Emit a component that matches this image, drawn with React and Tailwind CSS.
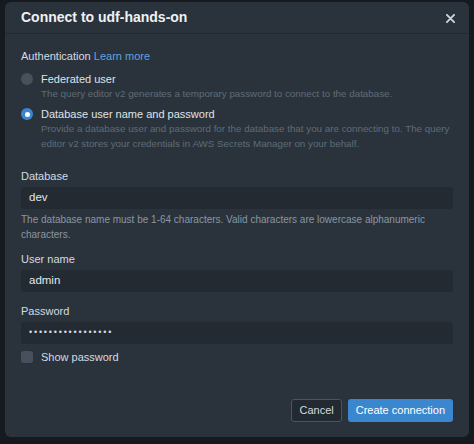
import { useState } from 'react';

export default function App() {
  const [auth, setAuth] = useState('db');
  const [showPassword, setShowPassword] = useState(false);

  return (
    <div
      className="w-[474px] h-[444px] bg-[#161a1f] px-[5px] pt-[2px] pb-[7px]"
      style={{ fontFamily: '"Liberation Sans", Arial, sans-serif' }}
    >
      <div className="h-full bg-[#2a333c] rounded-[6px] flex flex-col">
        <div className="h-[32px] flex items-center justify-between pl-[16px] pr-[11px] border-b border-[#222930]">
          <h1 className="text-[14px] font-bold text-[#eef1f4]">Connect to udf-hands-on</h1>
          <button className="text-[#d0d6dc] w-[16px] h-[16px] mt-[1px] flex items-center justify-center">
            <svg width="9" height="9" viewBox="0 0 10 10">
              <path d="M1 1L9 9M9 1L1 9" stroke="currentColor" strokeWidth="2" strokeLinecap="round" />
            </svg>
          </button>
        </div>

        <div className="flex-1 flex flex-col px-[16px] pt-[14px]">
          <div className="text-[11px] text-[#d5dbe1] leading-[16px]">
            Authentication <span className="text-[#5ea3dc]">Learn more</span>
          </div>

          <div className="mt-[8px] flex flex-col gap-[6px]">
            <RadioOption
              checked={auth === 'federated'}
              onClick={() => setAuth('federated')}
              label="Federated user"
              desc="The query editor v2 generates a temporary password to connect to the database."
            />
            <RadioOption
              checked={auth === 'db'}
              onClick={() => setAuth('db')}
              label="Database user name and password"
              desc="Provide a database user and password for the database that you are connecting to. The query editor v2 stores your credentials in AWS Secrets Manager on your behalf."
            />
          </div>

          <Field label="Database" value="dev" className="mt-[17px]" />
          <p className="mt-[4px] text-[10px] leading-[14.5px] text-[#8b96a1]">
            The database name must be 1-64 characters. Valid characters are lowercase alphanumeric characters.
          </p>

          <Field label="User name" value="admin" className="mt-[9px]" />
          <Field label="Password" value="•••••••••••••••••" className="mt-[11px]" password />

          <label className="mt-[5px] flex items-center gap-[8px] cursor-pointer" onClick={() => setShowPassword(!showPassword)}>
            <span className="w-[12px] h-[12px] rounded-[3px] bg-[#46515d]" />
            <span className="text-[11px] text-[#d5dbe1]">Show password</span>
          </label>

          <div className="mt-auto mb-[15px] flex justify-end gap-[6px]">
            <button className="h-[23px] px-[7px] text-[11px] text-[#d5dbe1] border border-[#4a5561] rounded-[3px] bg-[#222930]">
              Cancel
            </button>
            <button className="h-[23px] px-[8px] text-[11px] text-white bg-[#3b87cf] rounded-[3px]">
              Create connection
            </button>
          </div>
        </div>
      </div>
    </div>
  );
}

function RadioOption({ checked, onClick, label, desc }) {
  return (
    <div className="flex gap-[8px] cursor-pointer" onClick={onClick}>
      <div className="pt-[1px]">
        {checked ? (
          <span className="w-[12px] h-[12px] rounded-full bg-[#3b87cf] flex items-center justify-center">
            <span className="w-[5px] h-[5px] rounded-full bg-white" />
          </span>
        ) : (
          <span className="block w-[12px] h-[12px] rounded-full bg-[#46515d]" />
        )}
      </div>
      <div>
        <div className="text-[11px] leading-[14px] text-[#dfe4e9]">{label}</div>
        <div className="text-[9.8px] leading-[15px] text-[#5f6b77]">{desc}</div>
      </div>
    </div>
  );
}

function Field({ label, value, className, password }) {
  return (
    <div className={className}>
      <div className="text-[11px] leading-[16px] text-[#d5dbe1]">{label}</div>
      <div className="mt-[3px] h-[22px] bg-[#232a32] rounded-[3px] flex items-center px-[8px]">
        <span className={password ? 'text-[9px] tracking-[1.8px] text-[#d5dbe1]' : 'text-[11.5px] text-[#e3e7eb]'}>
          {value}
        </span>
      </div>
    </div>
  );
}
